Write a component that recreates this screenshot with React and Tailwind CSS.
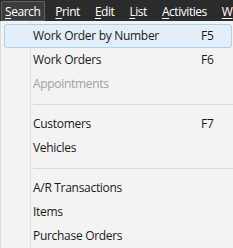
import React from "react";

const font = { fontFamily: '"Open Sans", "Noto Sans", sans-serif' };

function Item({ label, shortcut, active, disabled }) {
  return (
    <div className="h-[24px] relative flex items-center">
      {active && (
        <div className="absolute left-[3px] right-[1px] top-0 bottom-0 rounded-[3px] border border-[#a8d2f0] bg-[#e3eef9]" />
      )}
      <span className={"relative ml-[32px] flex-1 text-[12px] tracking-[-0.3px] leading-none " + (disabled ? "text-[#a0a0a0]" : "text-[#1a1a1a]")}>{label}</span>
      {shortcut && <span className="relative w-[32px] text-[12px] tracking-[-0.3px] leading-none text-[#1a1a1a]">{shortcut}</span>}
    </div>
  );
}

function Sep() {
  return (
    <div className="h-[16px] flex items-center">
      <div className="ml-[32px] flex-1 h-px bg-[#dadada]" />
    </div>
  );
}

function MenuTitle({ first, rest, active }) {
  return (
    <div className={"shrink-0 h-[20px] flex items-center pt-[1px] pl-[3px] pr-[4px] " + (active ? "border border-[#606060] bg-[#3c3c3c] rounded-[1px]" : "border border-transparent")}>
      <span className="text-white text-[12px] tracking-[-0.45px] leading-none">
        <span className="underline underline-offset-2">{first}</span>{rest}
      </span>
    </div>
  );
}

export default function App() {
  return (
    <div className="w-[233px] h-[248px] overflow-hidden bg-[#f3f3f3]" style={font}>
      <div className="h-[21px] bg-[#2b2b2b] flex items-start pt-[1px] pl-[1px] gap-[6px] whitespace-nowrap overflow-hidden">
        <MenuTitle first="S" rest="earch" active />
        <MenuTitle first="P" rest="rint" />
        <MenuTitle first="E" rest="dit" />
        <MenuTitle first="L" rest="ist" />
        <MenuTitle first="A" rest="ctivities" />
        <MenuTitle first="W" rest="indow" />
      </div>
      <div className="relative bg-[#f3f3f3] border-l border-[#dcdcdc] pt-[3px]">
        <div className="absolute left-[29px] top-0 bottom-0 w-px bg-[#e2e2e2]" />
        <Item label="Work Order by Number" shortcut="F5" active />
        <Item label="Work Orders" shortcut="F6" />
        <Item label="Appointments" disabled />
        <Sep />
        <Item label="Customers" shortcut="F7" />
        <Item label="Vehicles" />
        <Sep />
        <Item label="A/R Transactions" />
        <Item label="Items" />
        <Item label="Purchase Orders" />
      </div>
    </div>
  );
}
